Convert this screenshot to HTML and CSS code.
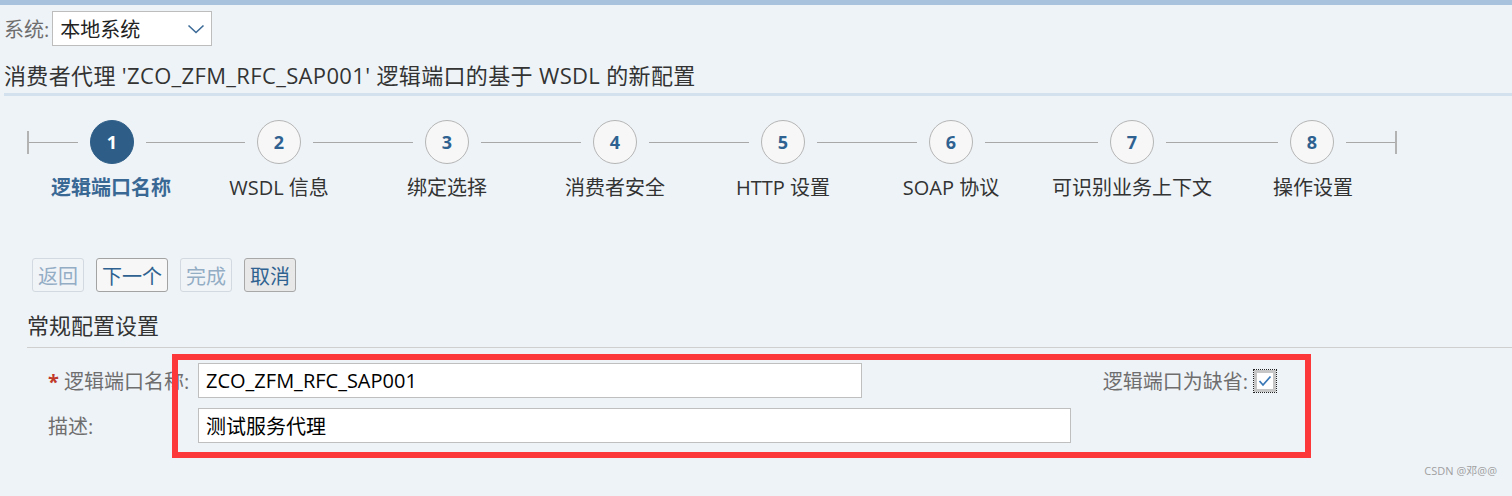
FILE: index.html
```html
<!DOCTYPE html>
<html lang="zh-CN">
<head>
    <meta charset="UTF-8">
    <meta name="viewport" content="width=device-width, initial-scale=1.0">
    <title>逻辑端口新配置</title>
    <link rel="stylesheet" href="styles.css">
</head>
<body>
    <div class="topbar"></div>

    <div class="system-row">
        <span class="system-label">系统:</span>
        <div class="select">
            <span>本地系统</span>
            <svg class="chevron" width="18" height="10" viewBox="0 0 18 10">
                <path d="M1.5 1.5 L9 8.5 L16.5 1.5" fill="none" stroke="#3b6a97" stroke-width="1.6"/>
            </svg>
        </div>
    </div>

    <h1 class="page-title">消费者代理 'ZCO_ZFM_RFC_SAP001' 逻辑端口的基于 WSDL 的新配置</h1>

    <!-- wizard roadmap -->
    <div class="roadmap">
        <div class="step current">
            <div class="step-head"><span class="tick"></span><span class="line"></span><span class="circle">1</span><span class="line"></span></div>
            <div class="step-name">逻辑端口名称</div>
        </div>
        <div class="step">
            <div class="step-head"><span class="line"></span><span class="circle">2</span><span class="line"></span></div>
            <div class="step-name">WSDL 信息</div>
        </div>
        <div class="step">
            <div class="step-head"><span class="line"></span><span class="circle">3</span><span class="line"></span></div>
            <div class="step-name">绑定选择</div>
        </div>
        <div class="step">
            <div class="step-head"><span class="line"></span><span class="circle">4</span><span class="line"></span></div>
            <div class="step-name">消费者安全</div>
        </div>
        <div class="step">
            <div class="step-head"><span class="line"></span><span class="circle">5</span><span class="line"></span></div>
            <div class="step-name">HTTP 设置</div>
        </div>
        <div class="step">
            <div class="step-head"><span class="line"></span><span class="circle">6</span><span class="line"></span></div>
            <div class="step-name">SOAP 协议</div>
        </div>
        <div class="step wide">
            <div class="step-head"><span class="line"></span><span class="circle">7</span><span class="line"></span></div>
            <div class="step-name">可识别业务上下文</div>
        </div>
        <div class="step">
            <div class="step-head"><span class="line"></span><span class="circle">8</span><span class="line"></span><span class="tick"></span></div>
            <div class="step-name">操作设置</div>
        </div>
    </div>

    <div class="actions">
        <button class="btn" disabled>返回</button>
        <button class="btn">下一个</button>
        <button class="btn" disabled>完成</button>
        <button class="btn pressed">取消</button>
    </div>

    <h2 class="section-title">常规配置设置</h2>

    <div class="form">
        <div class="form-row">
            <label class="field-label"><span class="req">*</span> 逻辑端口名称:</label>
            <input class="field name" type="text" value="ZCO_ZFM_RFC_SAP001">
            <span class="flag-label">逻辑端口为缺省:</span>
            <span class="checkbox">
                <span class="box">
                    <svg width="14" height="12" viewBox="0 0 14 12">
                        <path d="M1.5 6 L5 10 L12.5 1.5" fill="none" stroke="#3a78b6" stroke-width="1.8"/>
                    </svg>
                </span>
            </span>
        </div>
        <div class="form-row">
            <label class="field-label">描述:</label>
            <input class="field desc" type="text" value="测试服务代理">
        </div>
        <div class="mark"></div>
    </div>

    <div class="watermark">CSDN @邓@@</div>
</body>
</html>
```

FILE: styles.css
```css
body {
    margin: 0;
    background-color: #eef3f8;
    font-family: "Open Sans", "Noto Sans CJK SC", sans-serif;
    color: #333;
}
.topbar {
    height: 5px;
    background-color: #a8c2dd;
}
.system-row {
    display: flex;
    align-items: center;
    margin: 6px 0 0 4px;
}
.system-label {
    font-size: 20px;
    color: #6e6e6e;
    margin-right: 3px;
}
.select {
    width: 160px;
    height: 35px;
    box-sizing: border-box;
    border: 1px solid #bdbdbd;
    background-color: #fff;
    display: flex;
    align-items: center;
    justify-content: space-between;
    padding: 0 6px 0 7px;
    font-size: 20px;
    color: #222;
}
.page-title {
    font-size: 22px;
    font-weight: normal;
    line-height: 28px;
    letter-spacing: 0.35px;
    margin: 15px 0 0 4px;
    padding-bottom: 4px;
    border-bottom: 3px solid #d3e1ef;
    color: #333;
}

/* roadmap */
.roadmap {
    display: flex;
    margin: 24px 0 0 27px;
}
.step {
    width: 168px;
    display: flex;
    flex-direction: column;
    align-items: center;
}
.step.wide {
    width: 194px;
}
.step-head {
    display: flex;
    align-items: center;
    width: 100%;
    height: 44px;
}
.line {
    flex: 1;
    height: 1px;
    background-color: #a8a8a8;
}
.tick {
    width: 2px;
    height: 23px;
    background-color: #b3b3b3;
}
.circle {
    width: 44px;
    height: 44px;
    box-sizing: border-box;
    border-radius: 50%;
    border: 1.5px solid #b5b5b5;
    background-color: #f7f7f7;
    margin: 0 12px;
    display: flex;
    align-items: center;
    justify-content: center;
    font-size: 18px;
    font-weight: bold;
    color: #2f6290;
}
.current .circle {
    background-color: #2e5e87;
    border-color: #2e5e87;
    color: #fff;
}
.step-name {
    margin-top: 12px;
    font-size: 20px;
    line-height: 24px;
    white-space: nowrap;
}
.current .step-name {
    font-weight: bold;
    color: #3a6894;
}

/* buttons */
.actions {
    display: flex;
    gap: 12px;
    margin: 58px 0 0 32px;
}
.btn {
    height: 34px;
    padding: 0 5px;
    border: 1px solid #a3a3a3;
    border-radius: 3px;
    background-color: #f7f7f7;
    font-family: inherit;
    font-size: 20px;
    color: #2f6290;
}
.btn:disabled {
    border-color: #d2d9e0;
    background-color: #f1f4f7;
    color: #93adc5;
}
.btn.pressed {
    background-color: #e8e8e8;
    border-color: #a8a8a8;
}

.section-title {
    font-size: 22px;
    font-weight: normal;
    line-height: 28px;
    margin: 19px 0 0 27px;
    padding-bottom: 8px;
    border-bottom: 1px solid #cfcfcf;
}

/* form */
.form {
    position: relative;
    padding: 15px 235px 0 48px;
}
.form-row {
    display: flex;
    align-items: center;
    margin-bottom: 10px;
}
.field-label {
    width: 150px;
    font-size: 20px;
    color: #6e6e6e;
    white-space: nowrap;
}
.req {
    color: #c0392b;
    font-weight: bold;
}
.field {
    height: 35px;
    box-sizing: border-box;
    border: 1px solid #bfbfbf;
    background-color: #fff;
    padding: 0 7px;
    font-family: inherit;
    font-size: 20px;
    color: #000;
}
.field.name {
    width: 664px;
}
.field.desc {
    width: 873px;
}
.flag-label {
    margin-left: auto;
    font-size: 20px;
    color: #6e6e6e;
    margin-right: 5px;
}
.checkbox {
    width: 24px;
    height: 24px;
    box-sizing: border-box;
    border: 1px dotted #222;
    display: flex;
}
.box {
    flex: 1;
    border: 3px solid #c6c6c6;
    background-color: #fff;
    display: flex;
    align-items: center;
    justify-content: center;
}
.mark {
    position: absolute;
    left: 172px;
    top: 6px;
    width: 1139px;
    height: 104px;
    box-sizing: border-box;
    border: 6px solid #fd383a;
}
.watermark {
    margin-top: 21px;
    padding-right: 15px;
    text-align: right;
    font-size: 11px;
    line-height: 14px;
    color: #a0a0a0;
}
```
